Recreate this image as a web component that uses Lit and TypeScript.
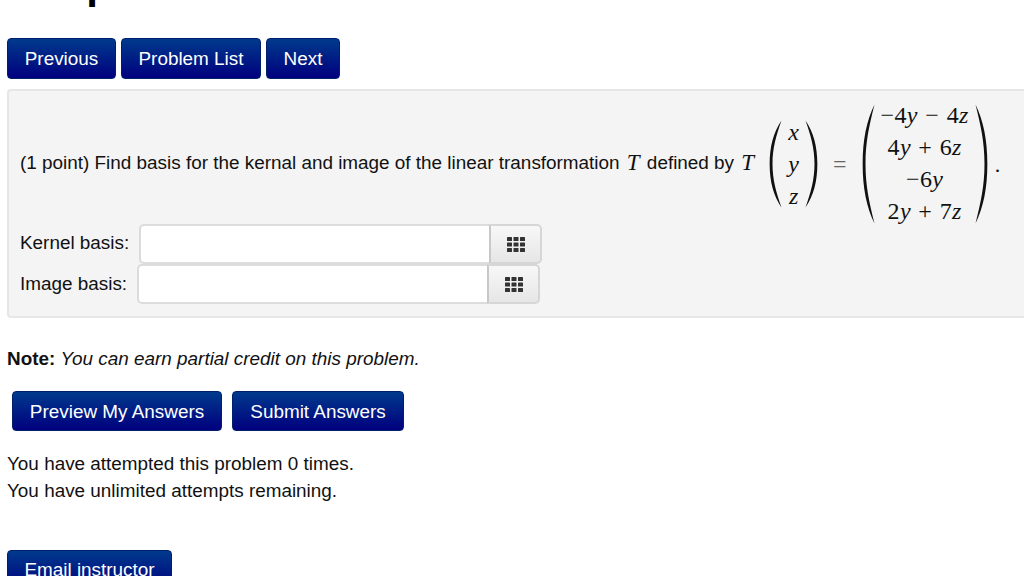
import { LitElement, html, svg, css } from "lit";
import { customElement } from "lit/decorators.js";

@customElement("app-root")
export class AppRoot extends LitElement {
  static styles = css`
    :host { display: block; width: 1024px; height: 576px; overflow: hidden; position: relative; background: #fff; font-family: "Liberation Sans", Arial, sans-serif; font-size: 18.9px; color: #111; }
    .page { display: flex; flex-direction: column; padding-left: 7px; width: 1017px; }
    h1 { margin: -39px 0 8px 0; height: 69px; font-size: 42px; line-height: 46px; font-weight: 700; color: #000; white-space: nowrap; word-spacing: -2px; }
    .btn { display: inline-flex; align-items: center; justify-content: center; box-sizing: border-box; height: 41px; padding-top: 1px; border: 1px solid #00206a; border-radius: 4px; background: linear-gradient(#003a8c, #00007f); color: #fff; font-size: 18.9px; white-space: nowrap; }
    .nav { display: flex; gap: 5px; height: 51px; }
    .nav .b1 { width: 109px; }
    .nav .b2 { width: 140px; }
    .nav .b3 { width: 74px; }
    .problem { box-sizing: border-box; height: 229px; margin-right: -1px; background: #f4f4f4; border: 2px solid #e6e6e6; border-right: none; border-radius: 4px 0 0 4px; padding: 11px 0 0 11px; display: flex; flex-direction: column; }
    .stmt { display: flex; align-items: center; height: 122px; white-space: nowrap; }
    .mi { font-family: "Liberation Serif", serif; font-style: italic; font-size: 23px; margin: 0 2px; }
    .paren { display: block; flex: none; }
    .p3 { margin-top: 1px; }
    .p4 { margin-top: 2px; }
    .gap { width: 13px; flex: none; }
    .vec { display: grid; justify-items: center; font-family: "Liberation Serif", serif; font-size: 24px; flex: none; }
    .vec3 { width: 23px; grid-auto-rows: 32px; height: 96px; align-items: center; font-style: italic; margin-top: 3px; }
    .vec4 { width: 100px; grid-auto-rows: 32px; height: 128px; align-items: center; margin-top: 1px; white-space: nowrap; }
    .vec4 span { letter-spacing: 0.4px; word-spacing: 1px; }
    .vec i { font-style: italic; }
    .eq { margin: 3px 15px 0 15px; font-family: "Liberation Serif", serif; font-size: 24px; color: #666; }
    .dot { margin: 3px 0 0 7px; font-family: "Liberation Serif", serif; font-size: 22px; }
    .row { display: flex; align-items: center; height: 40px; }
    .row label { margin-right: 10px; }
    .row.first label { margin-top: -2px; }
    .field { box-sizing: border-box; height: 40px; background: #fff; border: 2px solid #dcdcdc; border-right: none; border-radius: 5px 0 0 5px; }
    .f1 { width: 350px; }
    .f2 { width: 350px; }
    .pick { box-sizing: border-box; width: 53px; height: 40px; border: 2px solid #d6d6d6; border-left-color: #c8c8c8; border-radius: 0 5px 5px 0; background: linear-gradient(#f8f8f8, #e6e6e6); display: flex; align-items: center; justify-content: center; }
    .note { margin: 30px 0 0 0; height: 43px; line-height: 21px; }
    .actions { display: flex; gap: 10px; padding-left: 5px; height: 40px; }
    .actions .btn { height: 40px; }
    .a1 { width: 210px; }
    .a2 { width: 172px; }
    .status { margin-top: 19px; line-height: 27px; }
    .email { margin-top: 46px; width: 165px; height: 41px; align-items: flex-start; padding-top: 8px; }
  `;

  paren(h: number, w: number, right = false, cls = "") {
    const m = h / 2;
    const d = `M${w - 0.5} 0.5 C${w * 0.35} ${h * 0.14} ${w * 0.05} ${h * 0.3} ${w * 0.05} ${m} C${w * 0.05} ${h * 0.7} ${w * 0.35} ${h * 0.86} ${w - 0.5} ${h - 0.5} C${w * 0.55} ${h * 0.82} ${w * 0.27} ${h * 0.68} ${w * 0.27} ${m} C${w * 0.27} ${h * 0.32} ${w * 0.55} ${h * 0.18} ${w - 0.5} 0.5 Z`;
    return html`<svg class="paren ${cls}" width=${w} height=${h} viewBox="0 0 ${w} ${h}" style=${right ? "transform:scaleX(-1)" : ""}><path d=${d} fill="#111"></path></svg>`;
  }

  grid() {
    const cells = [];
    for (let y = 0; y < 3; y++) {
      for (let x = 0; x < 3; x++) {
        cells.push(svg`<rect x=${x * 6.5} y=${y * 5.5} width="5" height="4" rx="0.6" fill="#333"></rect>`);
      }
    }
    return html`<svg width="18" height="15" viewBox="0 0 18 15">${cells}</svg>`;
  }

  render() {
    return html`<div class="page">
      <h1>Chapter 11 Problem 5</h1>
      <div class="nav">
        <div class="btn b1">Previous</div>
        <div class="btn b2">Problem List</div>
        <div class="btn b3">Next</div>
      </div>
      <div class="problem">
        <div class="stmt">
          <span>(1 point) Find basis for the kernal and image of the linear transformation&nbsp;</span><span class="mi">T</span><span>&nbsp;defined by&nbsp;</span><span class="mi">T</span>
          <span class="gap"></span>
          ${this.paren(88, 13, false, "p3")}
          <div class="vec vec3"><span>x</span><span>y</span><span>z</span></div>
          ${this.paren(88, 13, true, "p3")}
          <span class="eq">=</span>
          ${this.paren(120, 13, false, "p4")}
          <div class="vec vec4">
            <span>−4<i>y</i> − 4<i>z</i></span>
            <span>4<i>y</i> + 6<i>z</i></span>
            <span>−6<i>y</i></span>
            <span>2<i>y</i> + 7<i>z</i></span>
          </div>
          ${this.paren(120, 13, true, "p4")}
          <span class="dot">.</span>
        </div>
        <div class="row first"><label>Kernel basis:</label><div class="field f1"></div><div class="pick">${this.grid()}</div></div>
        <div class="row"><label>Image basis:</label><div class="field f2"></div><div class="pick">${this.grid()}</div></div>
      </div>
      <div class="note"><b>Note:</b> <i>You can earn partial credit on this problem.</i></div>
      <div class="actions">
        <div class="btn a1">Preview My Answers</div>
        <div class="btn a2">Submit Answers</div>
      </div>
      <div class="status">You have attempted this problem 0 times.<br />You have unlimited attempts remaining.</div>
      <div class="btn email">Email instructor</div>
    </div>`;
  }
}
